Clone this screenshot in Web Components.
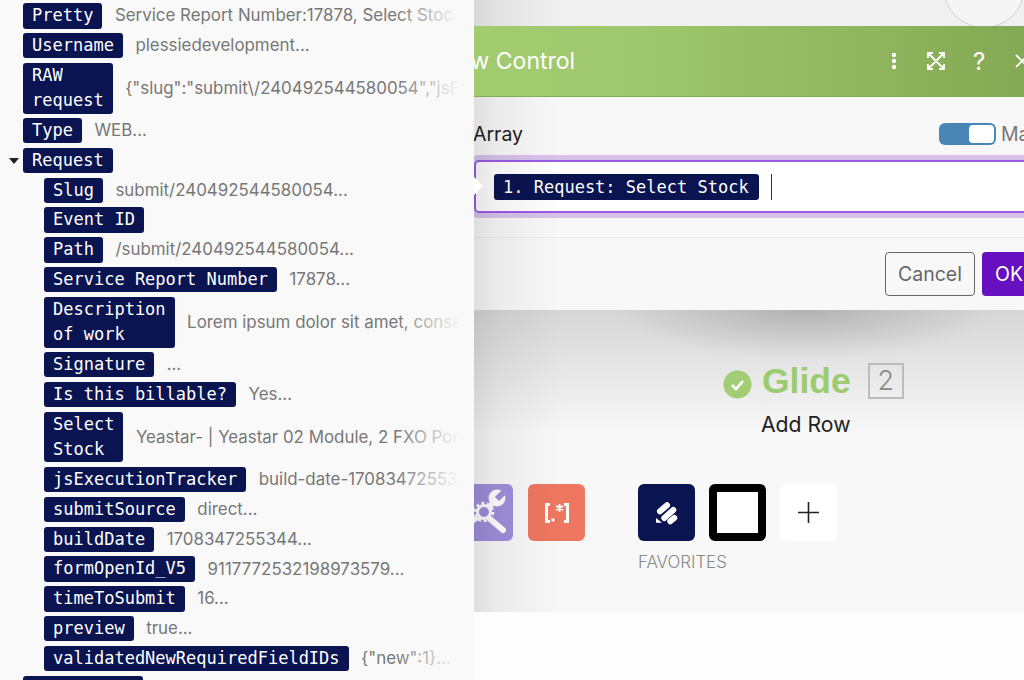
<!DOCTYPE html>
<html>
<head>
<meta charset="utf-8">
<title>Flow Control</title>
<style>
  html, body { margin: 0; height: 680px; overflow: hidden; background: #f8f8f8; }
  body { display: flex; font-family: Inter, "Liberation Sans", sans-serif; }
</style>
</head>
<body>

<data-panel>
  <data-row label="Pretty">Service Report Number:17878, Select Stoc</data-row>
  <data-row label="Username">plessiedevelopment...</data-row>
  <data-row label="RAW&#10;request">{"slug":"submit\/240492544580054","jsEx</data-row>
  <data-row label="Type">WEB...</data-row>
  <data-row label="Request" open></data-row>
  <data-group>
    <data-row label="Slug">submit/240492544580054...</data-row>
    <data-row label="Event ID"></data-row>
    <data-row label="Path">/submit/240492544580054...</data-row>
    <data-row label="Service Report Number">17878...</data-row>
    <data-row label="Description&#10;of work">Lorem ipsum dolor sit amet, conse</data-row>
    <data-row label="Signature">...</data-row>
    <data-row label="Is this billable?">Yes...</data-row>
    <data-row label="Select&#10;Stock">Yeastar- | Yeastar 02 Module, 2 FXO Por</data-row>
    <data-row label="jsExecutionTracker">build-date-17083472553</data-row>
    <data-row label="submitSource">direct...</data-row>
    <data-row label="buildDate">1708347255344...</data-row>
    <data-row label="formOpenId_V5">9117772532198973579...</data-row>
    <data-row label="timeToSubmit">16...</data-row>
    <data-row label="preview">true...</data-row>
    <data-row label="validatedNewRequiredFieldIDs">{"new":1}...</data-row>
  </data-group>
  <data-row label="" style="--pill-width: 120px"></data-row>
</data-panel>

<flow-stage>
  <flow-modal title="Flow Control"></flow-modal>
  <module-card name="Glide" count="2" action="Add Row"></module-card>
  <module-dock></module-dock>
</flow-stage>

<script>
// Left tree: one key pill plus its value
class DataRow extends HTMLElement {
  constructor() {
    super();
    this.attachShadow({ mode: 'open' });
  }

  connectedCallback() {
    const caret = this.hasAttribute('open')
      ? '<svg class="caret" width="10" height="6" viewBox="0 0 10 6"><path d="M0 0h10L5 6z" fill="#222"/></svg>'
      : '';
    this.shadowRoot.innerHTML = `
      <style>
        :host {
          display: flex;
          align-items: center;
          position: relative;
          white-space: nowrap;
        }
        .pill {
          flex: none;
          min-width: var(--pill-width, 0);
          box-sizing: border-box;
          padding: 0 9px;
          min-height: 25.4px;
          background: #0a1450;
          color: #fff;
          border-radius: 3px;
          font: 17px/25.4px "DejaVu Sans Mono", monospace;
          white-space: pre-line;
        }
        .value {
          margin-left: 12.5px;
          color: #777;
          font: 16.9px/25px Inter, "Liberation Sans", sans-serif;
        }
        .caret { position: absolute; left: -14px; top: 10px; }
      </style>
      ${caret}
      <div class="pill">${this.getAttribute('label')}</div>
      <div class="value"><slot></slot></div>
    `;
  }
}

class DataGroup extends HTMLElement {
  constructor() {
    super();
    this.attachShadow({ mode: 'open' });
    this.shadowRoot.innerHTML = `
      <style>
        :host {
          display: flex;
          flex-direction: column;
          gap: 4.42px;
          padding-left: 21px;
        }
      </style>
      <slot></slot>
    `;
  }
}

class DataPanel extends HTMLElement {
  constructor() {
    super();
    this.attachShadow({ mode: 'open' });
    this.shadowRoot.innerHTML = `
      <style>
        :host {
          display: block;
          flex: none;
          width: 474px;
          height: 680px;
          box-sizing: border-box;
          position: relative;
          z-index: 5;
          overflow: hidden;
          background: #f9f9f9;
        }
        .rows {
          display: flex;
          flex-direction: column;
          gap: 4.42px;
          padding: 3.1px 0 0 23px;
          width: 435px;
          height: 677px;
          box-sizing: content-box;
          overflow: hidden;
        }
        /* long values fade out before the panel edge */
        .fade {
          position: absolute;
          top: 0;
          bottom: 0;
          left: 395px;
          width: 79px;
          background: linear-gradient(to right, rgba(249,249,249,0), #f9f9f9 65px);
        }
      </style>
      <div class="rows"><slot></slot></div>
      <div class="fade"></div>
    `;
  }
}

class FlowStage extends HTMLElement {
  constructor() {
    super();
    this.attachShadow({ mode: 'open' });
    this.shadowRoot.innerHTML = `
      <style>
        :host {
          display: flex;
          flex-direction: column;
          flex: 1;
          min-width: 0;
          height: 680px;
          position: relative;
          overflow: hidden;
          background: #fdfdfd;
        }
        .top {
          flex: none;
          height: 26px;
          background: #f0f0f0;
          position: relative;
          overflow: hidden;
        }
        .node {
          position: absolute;
          left: 469px;
          top: -54px;
          width: 82px;
          height: 82px;
          box-sizing: border-box;
          border: 1px solid #cfcfcf;
          border-radius: 50%;
          background: #f5f5f5;
        }
        .shade {
          position: absolute;
          left: 0;
          top: 0;
          width: 90px;
          height: 612px;
          z-index: 1;
          pointer-events: none;
          background: linear-gradient(to right, rgba(0,0,0,.1), rgba(0,0,0,.05) 25px, rgba(0,0,0,0));
        }
      </style>
      <div class="shade"></div>
      <div class="top"><div class="node"></div></div>
      <slot></slot>
    `;
  }
}

class FlowModal extends HTMLElement {
  constructor() {
    super();
    this.attachShadow({ mode: 'open' });
  }

  connectedCallback() {
    this.shadowRoot.innerHTML = `
      <style>
        :host {
          display: block;
          flex: none;
          background: #f8f8f8;
        }
        header {
          height: 71px;
          box-sizing: border-box;
          display: flex;
          align-items: center;
          position: relative;
          z-index: 2;
          background: linear-gradient(to right, #a3cb70, #9fc76d 30%, #84a954);
          border-bottom: 1px solid #7fb04c;
          color: #fff;
          overflow: hidden;
        }
        h1 {
          flex: none;
          margin: 0 0 0 -36px;
          font: 400 23px Inter, "Liberation Sans", sans-serif;
          width: 453px;
        }
        .tools { display: flex; align-items: center; }
        .tools svg { flex: none; display: block; }
        .help { font: 400 24px Inter, "Liberation Sans", sans-serif; margin: 0 30px 0 27px; }
        .field {
          display: flex;
          align-items: center;
          height: 52px;
          padding-top: 11px;
          font-size: 19.5px;
          color: #222;
        }
        .field .name { margin-left: -1px; width: 466px; flex: none; }
        .toggle {
          flex: none;
          width: 57px;
          height: 22px;
          box-sizing: border-box;
          border-radius: 6px;
          background: #4a86b5;
          display: flex;
          justify-content: flex-end;
          padding: 2px;
        }
        .toggle i { display: block; width: 25px; background: #fff; border-radius: 4px; }
        .map { margin-left: 5px; color: #777; white-space: nowrap; }
        .input {
          height: 53px;
          box-sizing: border-box;
          margin-right: -20px;
          border: 2px solid #9a5be8;
          border-radius: 5px;
          box-shadow: 0 0 0 5px #d8c2ec;
          background: #fff;
          display: flex;
          align-items: center;
          padding-left: 18px;
          position: relative;
        }
        .pointer {
          position: absolute;
          z-index: 2;
          left: -2px;
          top: 15px;
          width: 0;
          height: 0;
          border: 9px solid transparent;
          border-left: 9px solid #fff;
          border-right: 0;
        }
        .token {
          padding: 0 10px 0 9px;
          height: 26px;
          background: #0a1450;
          color: #fff;
          border-radius: 3px;
          font: 17px/26px "DejaVu Sans Mono", monospace;
          white-space: pre;
        }
        .cursor { width: 1px; height: 26px; background: #333; margin-left: 12px; }
        .rule { height: 1px; background: #ececec; margin-top: 24px; }
        footer {
          display: flex;
          align-items: flex-start;
          padding: 14px 0 14px 411px;
          gap: 7px;
        }
        button {
          flex: none;
          height: 44px;
          box-sizing: border-box;
          border-radius: 4px;
          font: 400 19.5px Inter, "Liberation Sans", sans-serif;
        }
        .cancel { width: 90px; border: 1px solid #666; background: transparent; color: #666; padding: 0; }
        .ok { width: 60px; border: 0; background: #6610c0; color: #fff; padding: 0 0 0 13px; text-align: left; }
      </style>
      <header>
        <h1>${this.getAttribute('title')}</h1>
        <div class="tools">
          <svg width="6" height="18" viewBox="0 0 6 18" fill="#fff"><circle cx="3" cy="3" r="2.2"/><circle cx="3" cy="9" r="2.2"/><circle cx="3" cy="15" r="2.2"/></svg>
          <svg style="margin-left:29px" width="20" height="20" viewBox="0 0 20 20" fill="none" stroke="#fff" stroke-width="1.8"><path d="M3 3l14 14M17 3L3 17M2 7V2h5M13 2h5v5M2 13v5h5M18 13v5h-5"/></svg>
          <span class="help">?</span>
          <svg width="14" height="14" viewBox="0 0 14 14" fill="none" stroke="#fff" stroke-width="1.8"><path d="M1 1l12 12M13 1L1 13"/></svg>
        </div>
      </header>
      <div class="field">
        <span class="name">Array</span>
        <span class="toggle"><i></i></span>
        <span class="map">Map</span>
      </div>
      <div class="input">
        <span class="pointer"></span>
        <span class="token">1. Request: Select Stock</span>
        <span class="cursor"></span>
      </div>
      <div class="rule"></div>
      <footer>
        <button class="cancel">Cancel</button>
        <button class="ok">OK</button>
      </footer>
    `;
  }
}

class ModuleCard extends HTMLElement {
  constructor() {
    super();
    this.attachShadow({ mode: 'open' });
  }

  connectedCallback() {
    this.shadowRoot.innerHTML = `
      <style>
        :host {
          display: block;
          flex: none;
          height: 174px;
          box-sizing: border-box;
          padding: 52px 0 0 249px;
          background:
            radial-gradient(ellipse 190px 50px at 330px 0, rgba(0,0,0,.17), rgba(0,0,0,0)),
            linear-gradient(to bottom, #d6d6d6, #f8f8f8 125px);
        }
        .title { display: flex; align-items: center; height: 38px; }
        .title svg { flex: none; margin-top: 7px; }
        .name {
          margin-left: 10px;
          font: 700 35.5px/38px "Liberation Sans", sans-serif;
          color: #9dcb70;
        }
        .count {
          margin-left: 17px;
          width: 36px;
          height: 36px;
          box-sizing: border-box;
          border: 2px solid #bcbcbc;
          color: #888;
          font: 300 27px/32px Inter, "Liberation Sans", sans-serif;
          text-align: center;
        }
        .action {
          margin: 11px 0 0 38px;
          font: 400 21.2px/27px Inter, "Liberation Sans", sans-serif;
          color: #222;
        }
      </style>
      <div class="title">
        <svg width="29" height="29" viewBox="0 0 29 29"><circle cx="14.5" cy="14.5" r="14" fill="#a2cd75"/><path d="M9 15l4 4 7-8" fill="none" stroke="#fff" stroke-width="2.6"/></svg>
        <span class="name">${this.getAttribute('name')}</span>
        <span class="count">${this.getAttribute('count')}</span>
      </div>
      <div class="action">${this.getAttribute('action')}</div>
    `;
  }
}

class ModuleDock extends HTMLElement {
  constructor() {
    super();
    this.attachShadow({ mode: 'open' });
    this.shadowRoot.innerHTML = `
      <style>
        :host {
          display: block;
          flex: none;
          height: 128px;
          background: #f8f8f8;
        }
        .tiles { display: flex; gap: 14px; margin-left: -18px; }
        .tile { flex: none; width: 57px; height: 57px; box-sizing: border-box; border-radius: 6px; display: flex; align-items: center; justify-content: center; }
        .tools { background: #9f8fdc; margin-right: 1px; }
        .regex { background: #ee7760; margin-right: 39px; }
        .glide { background: #0a1450; }
        .blank { background: #fff; border: 8px solid #000; }
        .plus { background: #fff; }
        .label {
          margin: 11px 0 0 164px;
          font: 300 16.9px/20px Inter, "Liberation Sans", sans-serif;
          color: #888;
        }
      </style>
      <div class="tiles">
        <div class="tile tools">
          <svg width="57" height="57" viewBox="0 0 57 57" fill="none" stroke="#fff">
            <circle cx="28" cy="28" r="6.500" stroke-width="3"/>
            <circle cx="28" cy="28" r="9" stroke-width="2.600" stroke-dasharray="3 2.650"/>
            <path d="M33 23l5-5" stroke-width="5"/>
            <circle cx="41" cy="14" r="8.500" fill="#fff" stroke="none"/>
            <path d="M41 15L52 4" stroke="#9f8fdc" stroke-width="6"/>
            <path d="M34 35l13 11" stroke-width="6" stroke-linecap="round"/>
            <path d="M22 33l-9 7" stroke-width="5"/>
          </svg>
        </div>
        <div class="tile regex">
          <svg width="26" height="20" viewBox="0 0 26 20" fill="none" stroke="#fff" stroke-width="3">
            <path d="M6 1.500H2.500V18.500H6M20 1.500H23.500V18.500H20"/>
            <path d="M7.500 17H10.500"/>
            <path d="M15.500 1v8M12 3l7 4M19 3l-7 4" stroke-width="1.800"/>
          </svg>
        </div>
        <div class="tile glide">
          <svg width="57" height="57" viewBox="0 0 57 57" fill="none" stroke="#fff" stroke-width="6" stroke-linecap="round">
            <path d="M22 27.300L29 21.300"/>
            <path d="M26.300 34L35.300 26"/>
            <path d="M32.300 37.300L36.300 34"/>
            <path d="M18 34L24 38.700H18z" fill="#fff" stroke="none"/>
          </svg>
        </div>
        <div class="tile blank"></div>
        <div class="tile plus">
          <svg width="21" height="21" viewBox="0 0 21 21" stroke="#222" stroke-width="1.6"><path d="M10.500 0v21M0 10.500h21"/></svg>
        </div>
      </div>
      <div class="label">FAVORITES</div>
    `;
  }
}

customElements.define('data-row', DataRow);
customElements.define('data-group', DataGroup);
customElements.define('data-panel', DataPanel);
customElements.define('flow-stage', FlowStage);
customElements.define('flow-modal', FlowModal);
customElements.define('module-card', ModuleCard);
customElements.define('module-dock', ModuleDock);
</script>
</body>
</html>
